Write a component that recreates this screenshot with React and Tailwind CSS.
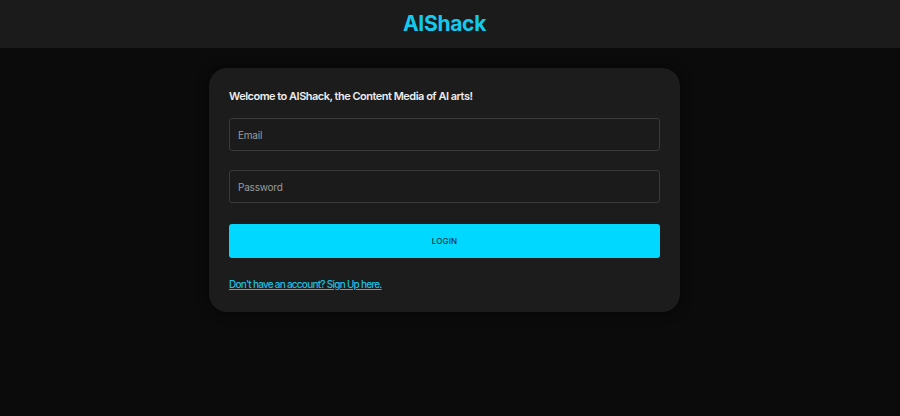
export default function App() {
  return (
    <div className="min-h-[416px] w-full bg-[#0b0b0b] font-['Inter','Liberation_Sans',sans-serif]">
      <header className="flex h-12 items-center justify-center bg-[#1b1b1b] pr-[11px]">
        <h1 className="text-[21px] font-bold tracking-[-0.3px] text-[#14c9ee]">AIShack</h1>
      </header>
      <main className="flex justify-center pr-[11px] pt-5">
        <div className="w-[471px] rounded-[18px] bg-[#1c1c1c] px-5 pb-5 pt-5 shadow-[0_0_12px_rgba(0,0,0,0.6)]">
          <p className="text-[11px] font-semibold leading-4 tracking-[-0.5px] text-[#ececec]">
            Welcome to AIShack, the Content Media of AI arts!
          </p>
          <input
            type="email"
            placeholder="Email"
            className="mt-[14px] block h-[33px] w-full rounded-[3px] border border-[#3a3a3a] bg-[#1b1b1b] px-[8px] text-[10px] tracking-[-0.2px] text-white placeholder:text-[#9b9b9b] outline-none"
          />
          <input
            type="password"
            placeholder="Password"
            className="mt-[19px] block h-[33px] w-full rounded-[3px] border border-[#3a3a3a] bg-[#1b1b1b] px-[8px] text-[10px] tracking-[-0.2px] text-white placeholder:text-[#9b9b9b] outline-none"
          />
          <button className="mt-[21px] flex h-[34px] w-full items-center justify-center rounded-[3px] bg-[#00d8ff] text-[8px] font-medium tracking-[0.2px] text-[#16343b]">
            LOGIN
          </button>
          <a href="#" className="mt-[18px] block w-fit text-[10px] font-medium leading-4 tracking-[-0.75px] text-[#1cc0e0] underline">
            Don't have an account? Sign Up here.
          </a>
        </div>
      </main>
    </div>
  );
}
